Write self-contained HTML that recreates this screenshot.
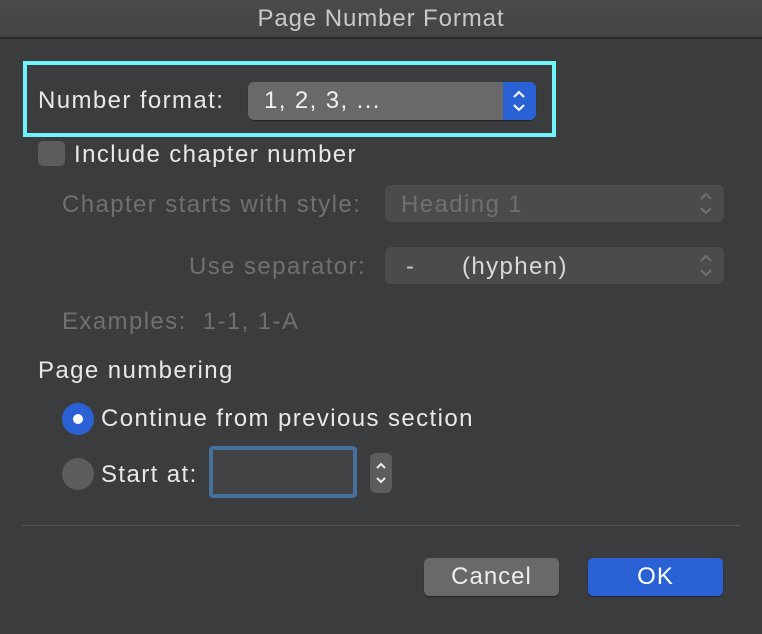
<!DOCTYPE html>
<html><head><meta charset="utf-8"><style>
*{margin:0;padding:0;box-sizing:border-box}
body{width:762px;height:634px;background:#3b3c3e;font-family:"Liberation Sans",sans-serif;position:relative;overflow:hidden;color:#e8e8e8}
.a{position:absolute;white-space:nowrap}
.title{left:0;top:0;width:762px;height:39px;background:linear-gradient(#4b4b4d,#434345);border-bottom:2px solid #2a2a2b;text-align:center;font-size:24px;letter-spacing:0.9px;line-height:37px;color:#c9c9c9}
.pop{border-radius:6px}
.t{font-size:24px;letter-spacing:1.4px}
.dim{color:#6f7072}
</style></head><body>
<div class="a title">Page Number Format</div>
<div class="a" style="left:23px;top:61px;width:533px;height:76px;border:4px solid #6ef3fb"></div>
<div class="a t" style="left:38px;top:87px">Number format:</div>
<div class="a pop" style="left:248px;top:82px;width:288px;height:38px;background:#69696b;box-shadow:0 1px 1px #222"></div>
<div class="a t" style="left:264px;top:87px;color:#f0f0f0">1, 2, 3, ...</div>
<div class="a" style="left:503px;top:82px;width:33px;height:38px;background:#2a62d6;border-radius:0 6px 6px 0"></div>
<svg class="a" style="left:510px;top:87px" width="18" height="28"><path d="M4 10 L9 5 L14 10 M4 18 L9 23 L14 18" stroke="#fff" stroke-width="2" fill="none"/></svg>
<div class="a" style="left:38px;top:141px;width:27px;height:25px;background:#5c5c5e;border-radius:5px"></div>
<div class="a t" style="left:74px;top:141px">Include chapter number</div>
<div class="a t dim" style="left:62px;top:191px">Chapter starts with style:</div>
<div class="a pop" style="left:385px;top:185px;width:339px;height:37px;background:#4a4b4d"></div>
<div class="a t dim" style="left:401px;top:191px">Heading 1</div>
<svg class="a" style="left:697px;top:189px" width="18" height="30"><path d="M4 10 L9 5 L14 10 M4 19 L9 24 L14 19" stroke="#707072" stroke-width="2" fill="none"/></svg>
<div class="a t dim" style="left:189px;top:253px">Use separator:</div>
<div class="a pop" style="left:385px;top:247px;width:339px;height:37px;background:#4a4b4d"></div>
<div class="a t" style="left:406px;top:253px;color:#c9c9c9">-</div>
<div class="a t" style="left:462px;top:253px;color:#d9d9d9">(hyphen)</div>
<svg class="a" style="left:697px;top:251px" width="18" height="30"><path d="M4 10 L9 5 L14 10 M4 19 L9 24 L14 19" stroke="#707072" stroke-width="2" fill="none"/></svg>
<div class="a t dim" style="left:62px;top:308px">Examples:&nbsp; 1-1, 1-A</div>
<div class="a t" style="left:38px;top:357px">Page numbering</div>
<div class="a" style="left:62px;top:403px;width:32px;height:32px;border-radius:50%;background:#2a62d6"></div>
<div class="a" style="left:73px;top:414px;width:10px;height:10px;border-radius:50%;background:#fff"></div>
<div class="a t" style="left:101px;top:405px">Continue from previous section</div>
<div class="a" style="left:62px;top:458px;width:32px;height:32px;border-radius:50%;background:#5c5c5e"></div>
<div class="a t" style="left:101px;top:461px">Start at:</div>
<div class="a" style="left:209px;top:446px;width:148px;height:52px;border:4px solid #46719f;border-radius:4px;background:#434345"></div>
<div class="a" style="left:370px;top:453px;width:22px;height:40px;border-radius:6px;background:#5c5c5e"></div>
<svg class="a" style="left:372px;top:457px" width="18" height="32"><path d="M5 11 L9 7 L13 11 M5 21 L9 25 L13 21" stroke="#eee" stroke-width="2" fill="none"/></svg>
<div class="a" style="left:22px;top:525px;width:718px;height:1px;background:#555658"></div>
<div class="a" style="left:424px;top:558px;width:135px;height:38px;border-radius:5px;background:#69696b;text-align:center;line-height:38px;font-size:24px;letter-spacing:1px;color:#eee;box-shadow:0 1px 1px #222">Cancel</div>
<div class="a" style="left:588px;top:558px;width:135px;height:38px;border-radius:5px;background:#2a62d6;text-align:center;line-height:38px;font-size:24px;letter-spacing:1px;color:#fff;box-shadow:0 1px 1px #222">OK</div>
</body></html>
